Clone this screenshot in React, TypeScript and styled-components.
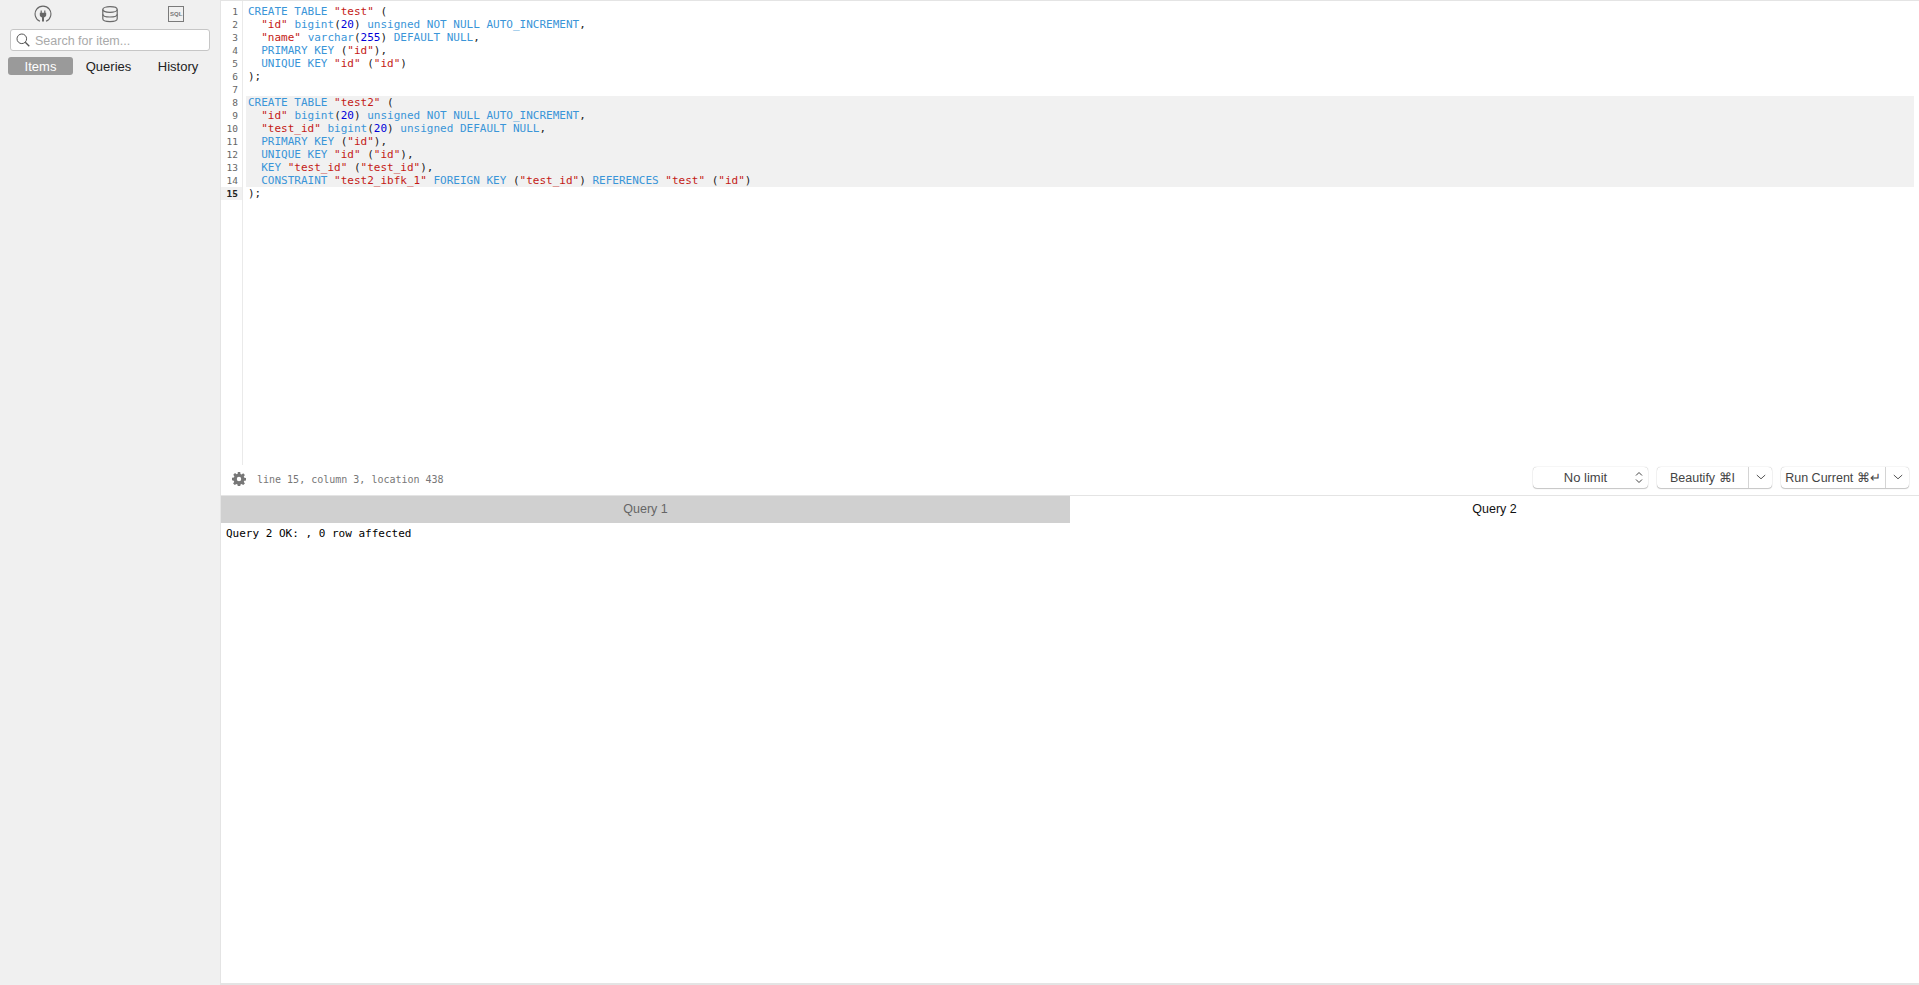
import React from 'react';
import styled, {createGlobalStyle} from "styled-components";

const GlobalStyle = createGlobalStyle`
  html, body {
    margin: 0;
    padding: 0;
    height: 100%;
    overflow: hidden;
    background: #fff;
  }
`

type Token = { t: string, k?: 'kw' | 'str' | 'num' }

const kw = (t: string): Token => ({t, k: 'kw'})
const str = (t: string): Token => ({t, k: 'str'})
const num = (t: string): Token => ({t, k: 'num'})
const p = (t: string): Token => ({t})

const codeLines: Token[][] = [
    [kw('CREATE TABLE'), p(' '), str('"test"'), p(' (')],
    [p('  '), str('"id"'), p(' '), kw('bigint'), p('('), num('20'), p(') '), kw('unsigned NOT NULL AUTO_INCREMENT'), p(',')],
    [p('  '), str('"name"'), p(' '), kw('varchar'), p('('), num('255'), p(') '), kw('DEFAULT NULL'), p(',')],
    [p('  '), kw('PRIMARY KEY'), p(' ('), str('"id"'), p('),')],
    [p('  '), kw('UNIQUE KEY'), p(' '), str('"id"'), p(' ('), str('"id"'), p(')')],
    [p(');')],
    [],
    [kw('CREATE TABLE'), p(' '), str('"test2"'), p(' (')],
    [p('  '), str('"id"'), p(' '), kw('bigint'), p('('), num('20'), p(') '), kw('unsigned NOT NULL AUTO_INCREMENT'), p(',')],
    [p('  '), str('"test_id"'), p(' '), kw('bigint'), p('('), num('20'), p(') '), kw('unsigned DEFAULT NULL'), p(',')],
    [p('  '), kw('PRIMARY KEY'), p(' ('), str('"id"'), p('),')],
    [p('  '), kw('UNIQUE KEY'), p(' '), str('"id"'), p(' ('), str('"id"'), p('),')],
    [p('  '), kw('KEY'), p(' '), str('"test_id"'), p(' ('), str('"test_id"'), p('),')],
    [p('  '), kw('CONSTRAINT'), p(' '), str('"test2_ibfk_1"'), p(' '), kw('FOREIGN KEY'), p(' ('), str('"test_id"'), p(') '), kw('REFERENCES'), p(' '), str('"test"'), p(' ('), str('"id"'), p(')')],
    [p(');')],
]

const PlugIcon = () => (
    <svg width="18" height="18" viewBox="0 0 18 18">
        <path d="M6 16.300A7.900 7.900 0 1 1 12 16.300" fill="none" stroke="#666" strokeWidth="1.100"/>
        <path d="M6.600 5.500h1.200v2.200h2.400V5.500h1.200v2.200h.8v2.400c0 1.300-1 2.200-2.200 2.400v4H8v-4c-1.200-.2-2.200-1.100-2.200-2.400V7.700h.8z" fill="#666"/>
    </svg>
)

const DatabaseIcon = () => (
    <svg width="18" height="18" viewBox="0 0 18 18" fill="none" stroke="#6a6a6a" strokeWidth="1.200">
        <ellipse cx="9" cy="4.500" rx="7.200" ry="2.800"/>
        <path d="M1.800 4.500v9.300c0 1.600 3.200 2.800 7.200 2.800s7.200-1.200 7.200-2.800V4.500"/>
        <path d="M1.800 9.200c0 1.600 3.200 2.800 7.200 2.800s7.200-1.200 7.200-2.800"/>
    </svg>
)

const SqlIcon = () => (
    <SqlBox>SQL</SqlBox>
)

const SearchIcon = () => (
    <svg width="14" height="14" viewBox="0 0 14 14" fill="none" stroke="#555" strokeWidth="1">
        <circle cx="5.800" cy="5.800" r="4.800"/>
        <path d="M9.300 9.300l4 4" strokeWidth="1.300"/>
    </svg>
)

const GearIcon = () => (
    <svg width="14" height="14" viewBox="0 0 14 14">
        <path fillRule="evenodd" fill="#777" d="M5.800 0h2.400l.3 1.900 1.100.5 1.600-1.100 1.700 1.700-1.100 1.600.5 1.100 1.900.3v2.400l-1.900.3-.5 1.100 1.100 1.600-1.700 1.700-1.600-1.100-1.100.5-.3 1.900H5.800l-.3-1.900-1.100-.5-1.600 1.100-1.700-1.700 1.100-1.600-.5-1.100L0 8.200V5.800l1.900-.3.5-1.100-1.100-1.600 1.700-1.700 1.600 1.100 1.100-.5zM7 4.800a2.200 2.200 0 1 0 0 4.400 2.200 2.200 0 0 0 0-4.400z"/>
    </svg>
)

const Chevron = () => (
    <svg width="10" height="6" viewBox="0 0 10 6" fill="none" stroke="#555" strokeWidth="1">
        <path d="M.8 1L5 4.800 9.200 1"/>
    </svg>
)

const UpDown = () => (
    <svg width="8" height="13" viewBox="0 0 8 13" fill="none" stroke="#444" strokeWidth="1">
        <path d="M1 4.500l3-3 3 3M1 8.500l3 3 3-3"/>
    </svg>
)

export default function App() {
    return (
        <>
            <GlobalStyle/>
            <Window>
                <Sidebar>
                    <IconRow>
                        <IconCell><PlugIcon/></IconCell>
                        <IconCell><DatabaseIcon/></IconCell>
                        <IconCell><SqlIcon/></IconCell>
                    </IconRow>
                    <SearchBox>
                        <SearchIcon/>
                        <SearchText>Search for item...</SearchText>
                    </SearchBox>
                    <SideTabs>
                        <SideTab $active>Items</SideTab>
                        <SideTab>Queries</SideTab>
                        <SideTab>History</SideTab>
                    </SideTabs>
                </Sidebar>
                <Main>
                    <Editor>
                        <Gutter>
                            {codeLines.map((_, i) => (
                                <LineNumber key={i} $current={i === 14}>{i + 1}</LineNumber>
                            ))}
                        </Gutter>
                        <Code>
                            {codeLines.map((line, i) => (
                                <CodeLine key={i} $selected={i >= 7 && i < 14}>
                                    {line.map((tok, j) => <Tok key={j} $k={tok.k}>{tok.t}</Tok>)}
                                </CodeLine>
                            ))}
                        </Code>
                    </Editor>
                    <StatusBar>
                        <StatusLeft>
                            <GearIcon/>
                            <StatusText>line 15, column 3, location 438</StatusText>
                        </StatusLeft>
                        <StatusRight>
                            <SelectButton>
                                <span>No limit</span>
                                <UpDownWrap><UpDown/></UpDownWrap>
                            </SelectButton>
                            <SplitButton>
                                <SplitMain $width={92}>Beautify ⌘I</SplitMain>
                                <SplitArrow><Chevron/></SplitArrow>
                            </SplitButton>
                            <SplitButton>
                                <SplitMain $width={105}>Run Current ⌘↵</SplitMain>
                                <SplitArrow><Chevron/></SplitArrow>
                            </SplitButton>
                        </StatusRight>
                    </StatusBar>
                    <QueryTabs>
                        <QueryTab>Query 1</QueryTab>
                        <QueryTab $active>Query 2</QueryTab>
                    </QueryTabs>
                    <Results>Query 2 OK: , 0 row affected</Results>
                </Main>
            </Window>
        </>
    );
}

const Window = styled.div`
  display: flex;
  width: 1919px;
  height: 985px;
  overflow: hidden;
  background: #fff;
  font-family: "Liberation Sans", Arial, sans-serif;
`

const Sidebar = styled.aside`
  width: 221px;
  flex-shrink: 0;
  box-sizing: border-box;
  padding-top: 5px;
  background: #f0f0f0;
  border-right: 1px solid #e4e4e4;
`

const IconRow = styled.div`
  display: grid;
  grid-template-columns: repeat(3, 66.5px);
  padding-left: 10px;
  height: 18px;
`

const IconCell = styled.div`
  display: flex;
  justify-content: center;
  align-items: center;
`

const SqlBox = styled.div`
  box-sizing: border-box;
  width: 16px;
  height: 16px;
  border: 1px solid #7a7a7a;
  font-size: 6px;
  font-weight: bold;
  line-height: 14px;
  text-align: center;
  color: #777;
`

const SearchBox = styled.div`
  box-sizing: border-box;
  display: flex;
  align-items: center;
  gap: 5px;
  width: 200px;
  height: 22px;
  margin: 6px 0 0 10px;
  padding: 0 5px;
  background: #fff;
  border: 1px solid #c6c6c6;
  border-radius: 3px;
`

const SearchText = styled.span`
  padding-top: 2px;
  font-size: 12.500px;
  color: #a9a9a9;
`

const SideTabs = styled.div`
  display: grid;
  grid-template-columns: 65px 71px 68px;
  margin: 6px 0 0 8px;
`

const SideTab = styled.div<{ $active?: boolean }>`
  height: 18px;
  line-height: 19px;
  text-align: center;
  font-size: 13px;
  border-radius: 3px;
  color: ${props => props.$active ? '#fff' : '#222'};
  background: ${props => props.$active ? '#9a9a9a' : 'transparent'};
`

const Main = styled.main`
  flex: 1;
  min-width: 0;
  display: flex;
  flex-direction: column;
`

const Editor = styled.div`
  display: flex;
  height: 465px;
  box-sizing: border-box;
  padding-right: 5px;
  border-top: 1px solid #e4e4e4;
  font-family: "DejaVu Sans Mono", monospace;
  font-size: 11px;
  line-height: 13px;
`

const Gutter = styled.div`
  width: 22px;
  flex-shrink: 0;
  box-sizing: border-box;
  padding-top: 4px;
  border-right: 1px solid #eaeaea;
`

const LineNumber = styled.div<{ $current?: boolean }>`
  height: 13px;
  padding-right: 4px;
  text-align: right;
  font-size: 9.500px;
  color: ${props => props.$current ? '#222' : '#666'};
  font-weight: ${props => props.$current ? 'bold' : 'normal'};
  background: ${props => props.$current ? '#f1f1f1' : 'transparent'};
`

const Code = styled.div`
  flex: 1;
  padding-top: 4px;
  padding-left: 3px;
`

const CodeLine = styled.div<{ $selected?: boolean }>`
  height: 13px;
  padding-left: 2px;
  white-space: pre;
  color: #222;
  background: ${props => props.$selected ? '#f1f1f1' : 'transparent'};
`

const tokenColors = {kw: '#3a95d8', str: '#c41a16', num: '#0000d8'}

const Tok = styled.span<{ $k?: 'kw' | 'str' | 'num' }>`
  color: ${props => props.$k ? tokenColors[props.$k] : '#222'};
`

const StatusBar = styled.div`
  height: 31px;
  flex-shrink: 0;
  display: flex;
  align-items: center;
  justify-content: space-between;
  box-sizing: border-box;
  padding: 0 10px 0 11px;
  border-bottom: 1px solid #e4e4e4;
`

const StatusLeft = styled.div`
  display: flex;
  align-items: center;
  gap: 11px;
  margin-bottom: 2px;
`

const StatusText = styled.span`
  font-family: "DejaVu Sans Mono", monospace;
  font-size: 10px;
  color: #777;
`

const StatusRight = styled.div`
  display: flex;
  align-items: center;
  gap: 9px;
  margin-bottom: 6px;
`

const SelectButton = styled.div`
  position: relative;
  box-sizing: border-box;
  width: 115px;
  height: 21px;
  line-height: 22px;
  padding-right: 10px;
  text-align: center;
  font-size: 13px;
  color: #444;
  background: #fff;
  border-radius: 4px;
  box-shadow: 0 0 1px rgba(0, 0, 0, .35), 0 1px 1px rgba(0, 0, 0, .2);
`

const UpDownWrap = styled.span`
  position: absolute;
  right: 5px;
  top: 4px;
  display: flex;
`

const SplitButton = styled.div`
  display: flex;
  height: 21px;
  background: #fff;
  border-radius: 4px;
  box-shadow: 0 0 1px rgba(0, 0, 0, .35), 0 1px 1px rgba(0, 0, 0, .2);
`

const SplitMain = styled.div<{ $width: number }>`
  box-sizing: border-box;
  width: ${props => props.$width}px;
  line-height: 22px;
  text-align: center;
  white-space: nowrap;
  font-size: 12.500px;
  color: #444;
  border-right: 1px solid #d4d4d4;
`

const SplitArrow = styled.div`
  width: 23px;
  display: flex;
  align-items: center;
  justify-content: center;
`

const QueryTabs = styled.div`
  display: grid;
  grid-template-columns: 1fr 1fr;
  height: 27px;
  flex-shrink: 0;
`

const QueryTab = styled.div<{ $active?: boolean }>`
  line-height: 27px;
  text-align: center;
  font-size: 12.500px;
  color: ${props => props.$active ? '#111' : '#666'};
  background: ${props => props.$active ? '#fff' : '#d0d0d0'};
`

const Results = styled.div`
  flex: 1;
  padding: 4px 0 0 5px;
  font-family: "DejaVu Sans Mono", monospace;
  font-size: 11px;
  line-height: 13px;
  color: #000;
  border-bottom: 2px solid #e4e4e4;
`
